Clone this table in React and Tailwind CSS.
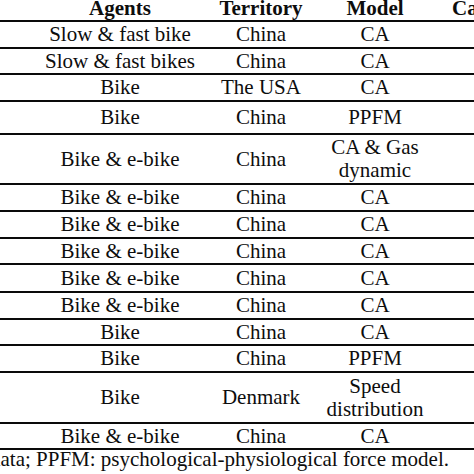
// App.jsx — cropped results table
const rows = [
  { h: 'h-[27px]', agents: 'Slow & fast bike', territory: 'China', model: 'CA' },
  { h: 'h-[26px]', agents: 'Slow & fast bikes', territory: 'China', model: 'CA' },
  { h: 'h-[27px]', agents: 'Bike', territory: 'The USA', model: 'CA' },
  { h: 'h-[33px]', agents: 'Bike', territory: 'China', model: 'PPFM' },
  { h: 'h-[50px]', agents: 'Bike & e-bike', territory: 'China', model: ['CA & Gas', 'dynamic'] },
  { h: 'h-[27px]', agents: 'Bike & e-bike', territory: 'China', model: 'CA' },
  { h: 'h-[27px]', agents: 'Bike & e-bike', territory: 'China', model: 'CA' },
  { h: 'h-[26px]', agents: 'Bike & e-bike', territory: 'China', model: 'CA' },
  { h: 'h-[28px]', agents: 'Bike & e-bike', territory: 'China', model: 'CA' },
  { h: 'h-[27px]', agents: 'Bike & e-bike', territory: 'China', model: 'CA' },
  { h: 'h-[26px]', agents: 'Bike', territory: 'China', model: 'CA' },
  { h: 'h-[27px]', agents: 'Bike', territory: 'China', model: 'PPFM' },
  { h: 'h-[51px]', agents: 'Bike', territory: 'Denmark', model: ['Speed', 'distribution'] },
  { h: 'h-[26px]', agents: 'Bike & e-bike', territory: 'China', model: 'CA' },
];

function Cell({ className, children }) {
  return (
    <div className={'flex items-center justify-center text-center ' + className}>
      <span className="whitespace-nowrap">{children}</span>
    </div>
  );
}

export default function App() {
  return (
    <div
      className="w-[474px] h-[474px] overflow-hidden bg-white text-[#0d0d0d] text-[21px] leading-[23px]"
      style={{ fontFamily: '"Liberation Serif", "Times New Roman", serif' }}
    >
      {/* cabecera */}
      <div className="flex h-[22px] border-b-2 border-[#0a0a0a] font-bold">
        <div className="w-[40px] shrink-0" />
        <Cell className="w-[160px] shrink-0 pb-[4px]">Agents</Cell>
        <Cell className="w-[122px] shrink-0 pb-[4px]">Territory</Cell>
        <Cell className="w-[106px] shrink-0 pb-[4px]">Model</Cell>
        <div className="flex-1 flex items-center pl-[24px] pb-[4px] whitespace-nowrap">Calibration</div>
      </div>

      {rows.map((r, i) => (
        <div key={i} className={'flex border-b-2 border-[#0a0a0a] ' + r.h}>
          <div className="w-[40px] shrink-0" />
          <Cell className="w-[160px] shrink-0">{r.agents}</Cell>
          <Cell className="w-[122px] shrink-0">{r.territory}</Cell>
          <Cell className="w-[106px] shrink-0">
            {Array.isArray(r.model) ? (
              <>
                {r.model[0]}
                <br />
                {r.model[1]}
              </>
            ) : (
              r.model
            )}
          </Cell>
          <div className="flex-1" />
        </div>
      ))}

      {/* nota al pie */}
      <div className="leading-[18px] whitespace-nowrap -ml-[52px]">
        automata; PPFM: psychological-physiological force model.
      </div>
    </div>
  );
}
